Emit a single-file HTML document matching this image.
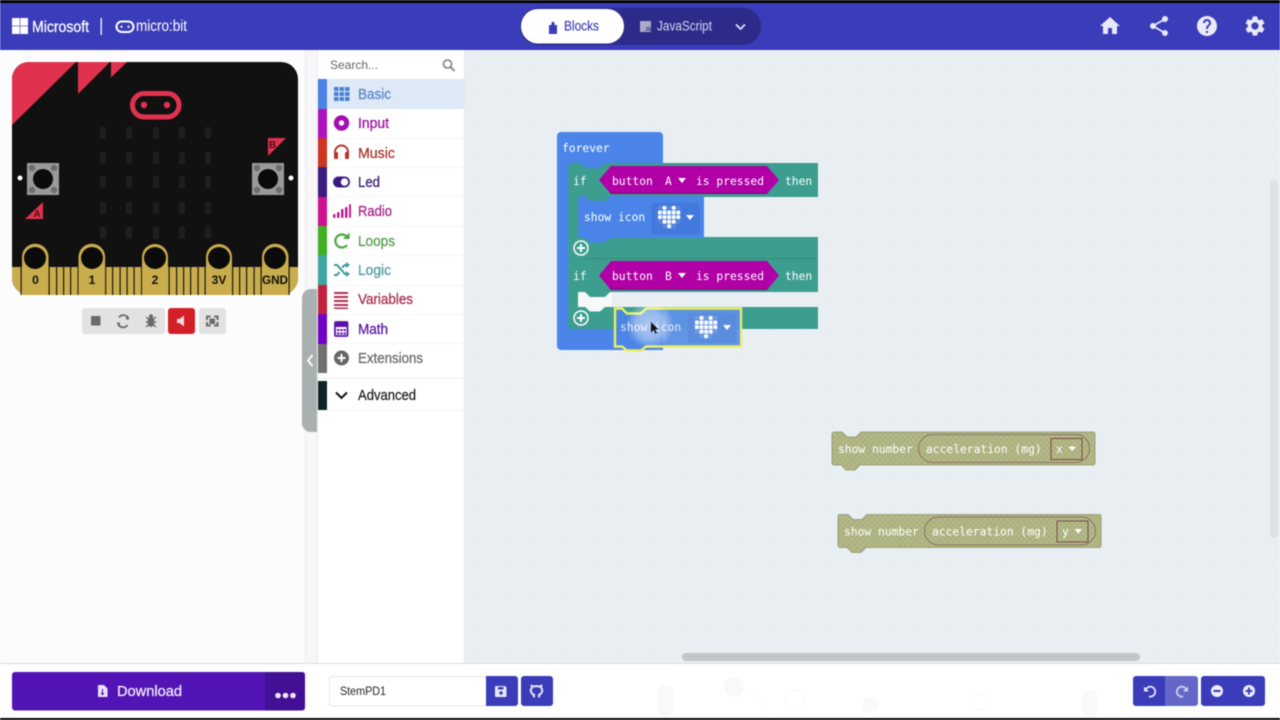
<!DOCTYPE html>
<html><head><meta charset="utf-8"><style>
html,body{margin:0;padding:0;width:1280px;height:720px;overflow:hidden;background:#fff}
svg{display:block;font-family:"Liberation Sans",sans-serif;filter:blur(.4px)}
.m{font-family:"DejaVu Sans Mono","Liberation Mono",monospace;font-size:11.3px;fill:#fff}
.t{font-size:14.5px;stroke-width:.25px}
</style></head><body>
<svg width="1280" height="720" viewBox="0 0 1280 720" xmlns="http://www.w3.org/2000/svg">
<defs>
<pattern id="dots" width="29.5" height="29.5" patternUnits="userSpaceOnUse" x="3" y="5"><rect width="1.5" height="1.5" fill="#e0e4e8"/></pattern>
<pattern id="hatch" width="4" height="4" patternUnits="userSpaceOnUse" patternTransform="rotate(45)"><rect width="4" height="4" fill="#afb482"/><rect width="2" height="2" fill="#b7bb8e"/><rect x="2" y="2" width="2" height="2" fill="#a9ae7c"/></pattern>
<radialGradient id="glow"><stop offset="0" stop-color="#fff" stop-opacity=".55"/><stop offset=".6" stop-color="#fff" stop-opacity=".4"/><stop offset="1" stop-color="#fff" stop-opacity="0"/></radialGradient>
<g id="heart" fill="#fff">
<g fill="#fff"><rect x="4.6" y="0" width="3.8" height="3.8"/><rect x="13.8" y="0" width="3.8" height="3.8"/>
<rect x="0" y="4.6" width="3.8" height="3.8"/><rect x="4.6" y="4.6" width="3.8" height="3.8"/><rect x="9.2" y="4.6" width="3.8" height="3.8"/><rect x="13.8" y="4.6" width="3.8" height="3.8"/><rect x="18.4" y="4.6" width="3.8" height="3.8"/>
<rect x="0" y="9.2" width="3.8" height="3.8"/><rect x="4.6" y="9.2" width="3.8" height="3.8"/><rect x="9.2" y="9.2" width="3.8" height="3.8"/><rect x="13.8" y="9.2" width="3.8" height="3.8"/><rect x="18.4" y="9.2" width="3.8" height="3.8"/>
<rect x="4.6" y="13.8" width="3.8" height="3.8"/><rect x="9.2" y="13.8" width="3.8" height="3.8"/><rect x="13.8" y="13.8" width="3.8" height="3.8"/>
<rect x="9.2" y="18.4" width="3.8" height="3.8"/></g>
<g fill="#fff" opacity=".12"><rect x="9.2" y="0" width="3.8" height="3.8"/><rect x="0" y="0" width="3.8" height="3.8"/><rect x="18.4" y="0" width="3.8" height="3.8"/><rect x="0" y="13.8" width="3.8" height="3.8"/><rect x="18.4" y="13.8" width="3.8" height="3.8"/><rect x="4.6" y="18.4" width="3.8" height="3.8"/><rect x="13.8" y="18.4" width="3.8" height="3.8"/></g>
</g>
</defs>

<!-- backgrounds -->
<rect width="1280" height="720" fill="#fff"/>
<rect x="0" y="49" width="305" height="614" fill="#fcfcfd"/>
<rect x="305" y="49" width="13" height="614" fill="#f7f7f8"/>
<rect x="305" y="49" width="1" height="614" fill="#ececec"/>
<rect x="317" y="49" width="1" height="614" fill="#ececec"/>
<rect x="465" y="49" width="815" height="614" fill="#e9eef2"/>
<rect x="465" y="49" width="815" height="614" fill="url(#dots)"/>
<rect x="318" y="49" width="147" height="614" fill="#fff"/>
<rect x="464" y="49" width="1" height="614" fill="#e6e8ea"/>

<!-- header -->
<rect width="1280" height="50" fill="#3a3cb9"/>
<rect width="1280" height="3" fill="#000"/>
<g fill="#fff"><rect x="12" y="18" width="7.7" height="7.7"/><rect x="20.3" y="18" width="7.7" height="7.7"/><rect x="12" y="26.3" width="7.7" height="7.7"/><rect x="20.3" y="26.3" width="7.7" height="7.7"/></g>
<text x="32" y="32" font-size="15.500" fill="#fff" stroke="#fff" stroke-width=".25" textLength="57" lengthAdjust="spacingAndGlyphs">Microsoft</text>
<rect x="100.500" y="18" width="1.400" height="17" fill="#eef"/>
<rect x="116.500" y="21.500" width="17" height="10.500" rx="5.200" fill="none" stroke="#fff" stroke-width="2"/>
<circle cx="121.500" cy="26.700" r="1.100" fill="#fff"/><circle cx="128.500" cy="26.700" r="1.100" fill="#fff"/>
<text x="136" y="31" font-size="15.500" fill="#fff" textLength="51" lengthAdjust="spacingAndGlyphs">micro:bit</text>

<rect x="520" y="8" width="241" height="37" rx="18.500" fill="#2c2b8a"/>
<rect x="521" y="9" width="103" height="34.500" rx="17" fill="#fff"/>
<path d="M549 25h2.500v-1.800a1.500 1.500 0 0 1 3 0V25H557v9h-8z" fill="#3a3cb9"/>
<text x="564" y="30.500" font-size="13.500" fill="#3a3cb9" stroke="#3a3cb9" stroke-width=".15" textLength="35" lengthAdjust="spacingAndGlyphs">Blocks</text>
<rect x="640" y="21" width="11" height="11" fill="#a9abc9"/><text x="645" y="31" font-size="5" font-weight="700" fill="#2c2b8a">JS</text>
<text x="657" y="30.500" font-size="13.500" fill="#d6d6f2" textLength="55" lengthAdjust="spacingAndGlyphs">JavaScript</text>
<path d="M736 24.500l4.500 4.500 4.500-4.500" fill="none" stroke="#dfe0f5" stroke-width="1.800"/>

<g fill="#e9e9f8">
<path transform="translate(1098 14)" d="M10 20v-6h4v6h5v-8h3L12 3 2 12h3v8z"/>
<path transform="translate(1147 14)" d="M18 16.080c-.76 0-1.440.3-1.960.77L8.910 12.700c.05-.23.09-.46.09-.7s-.04-.47-.09-.7l7.050-4.110c.54.5 1.250.81 2.040.81 1.660 0 3-1.340 3-3s-1.340-3-3-3-3 1.340-3 3c0 .24.04.47.09.7L8.040 9.810C7.500 9.310 6.790 9 6 9c-1.660 0-3 1.340-3 3s1.340 3 3 3c.79 0 1.500-.31 2.040-.81l7.120 4.160c-.05.21-.08.43-.08.65 0 1.610 1.310 2.920 2.920 2.920 1.610 0 2.920-1.310 2.920-2.920s-1.310-2.920-2.920-2.920z"/>
<path transform="translate(1195 14)" d="M12 2C6.480 2 2 6.480 2 12s4.480 10 10 10 10-4.480 10-10S17.520 2 12 2zm1 17h-2v-2h2v2zm2.070-7.750l-.9.92C13.450 12.900 13 13.500 13 15h-2v-.5c0-1.100.45-2.100 1.170-2.830l1.240-1.260c.37-.36.59-.86.59-1.410 0-1.100-.9-2-2-2s-2 .9-2 2H8c0-2.210 1.790-4 4-4s4 1.790 4 4c0 .88-.36 1.680-.93 2.250z"/>
<path transform="translate(1243 14)" d="M19.140 12.940c.04-.3.06-.61.06-.94 0-.32-.02-.64-.07-.94l2.030-1.580c.18-.14.23-.41.12-.61l-1.920-3.320c-.12-.22-.37-.29-.59-.22l-2.390.96c-.5-.38-1.030-.7-1.620-.94l-.36-2.540c-.04-.24-.24-.41-.48-.41h-3.840c-.24 0-.43.17-.47.41l-.36 2.540c-.59.24-1.130.57-1.620.94l-2.390-.96c-.22-.08-.47 0-.59.22L2.740 8.870c-.12.21-.08.47.12.61l2.030 1.580c-.05.3-.09.63-.09.94s.02.64.07.94l-2.030 1.580c-.18.14-.23.41-.12.61l1.920 3.320c.12.22.37.29.59.22l2.390-.96c.5.38 1.030.7 1.620.94l.36 2.540c.05.24.24.41.48.41h3.840c.24 0 .44-.17.47-.41l.36-2.540c.59-.24 1.130-.56 1.620-.94l2.390.96c.22.08.47 0 .59-.22l1.920-3.320c.12-.22.07-.47-.12-.61l-2.010-1.580zM12 15.600c-1.980 0-3.600-1.620-3.600-3.600s1.620-3.600 3.600-3.600 3.600 1.620 3.600 3.600-1.620 3.600-3.600 3.600z"/>
</g>

<!-- micro:bit -->
<rect x="12" y="62" width="286" height="233" rx="17" fill="#111"/>
<path d="M12 125V79a17 17 0 0 1 17-17h47z" fill="#e0324f"/>
<path d="M78 62h32L78 94z" fill="#e0324f"/>
<path d="M111 62h16l-16 15.500z" fill="#e0324f"/>
<rect x="132.500" y="93.500" width="46.500" height="23.500" rx="11.700" fill="none" stroke="#e0324f" stroke-width="5"/>
<circle cx="144" cy="105" r="3.200" fill="#e0324f"/><circle cx="167" cy="105" r="3.200" fill="#e0324f"/>
<g fill="#1e1e1e">
<rect x="100" y="127" width="6" height="12" rx="1.500"/><rect x="126" y="127" width="6" height="12" rx="1.500"/><rect x="153" y="127" width="6" height="12" rx="1.500"/><rect x="179" y="127" width="6" height="12" rx="1.500"/><rect x="205" y="127" width="6" height="12" rx="1.500"/>
<rect x="100" y="152" width="6" height="12" rx="1.500"/><rect x="126" y="152" width="6" height="12" rx="1.500"/><rect x="153" y="152" width="6" height="12" rx="1.500"/><rect x="179" y="152" width="6" height="12" rx="1.500"/><rect x="205" y="152" width="6" height="12" rx="1.500"/>
<rect x="100" y="176" width="6" height="12" rx="1.500"/><rect x="126" y="176" width="6" height="12" rx="1.500"/><rect x="153" y="176" width="6" height="12" rx="1.500"/><rect x="179" y="176" width="6" height="12" rx="1.500"/><rect x="205" y="176" width="6" height="12" rx="1.500"/>
<rect x="100" y="202" width="6" height="12" rx="1.500"/><rect x="126" y="202" width="6" height="12" rx="1.500"/><rect x="153" y="202" width="6" height="12" rx="1.500"/><rect x="179" y="202" width="6" height="12" rx="1.500"/><rect x="205" y="202" width="6" height="12" rx="1.500"/>
<rect x="100" y="227" width="6" height="12" rx="1.500"/><rect x="126" y="227" width="6" height="12" rx="1.500"/><rect x="153" y="227" width="6" height="12" rx="1.500"/><rect x="179" y="227" width="6" height="12" rx="1.500"/><rect x="205" y="227" width="6" height="12" rx="1.500"/>
</g>
<!-- push buttons -->
<rect x="27" y="163" width="32" height="32" fill="#9a9a9a"/><circle cx="43" cy="179" r="10" fill="#0b0b0b"/>
<circle cx="32" cy="168" r="3.200" fill="#6e6e6e"/><circle cx="54" cy="168" r="3.200" fill="#6e6e6e"/><circle cx="32" cy="190" r="3.200" fill="#6e6e6e"/><circle cx="54" cy="190" r="3.200" fill="#6e6e6e"/>
<rect x="252" y="163" width="32" height="32" fill="#9a9a9a"/><circle cx="268" cy="179" r="10" fill="#0b0b0b"/>
<circle cx="257" cy="168" r="3.200" fill="#6e6e6e"/><circle cx="279" cy="168" r="3.200" fill="#6e6e6e"/><circle cx="257" cy="190" r="3.200" fill="#6e6e6e"/><circle cx="279" cy="190" r="3.200" fill="#6e6e6e"/>
<circle cx="20" cy="178" r="2.500" fill="#fff"/><circle cx="291" cy="178" r="2.500" fill="#fff"/>
<path d="M268 138h18l-18 18z" fill="#e0324f"/><text x="269" y="148" font-size="10" font-weight="700" fill="#4a0d18">B</text>
<path d="M43 202v17H25z" fill="#e0324f"/><text x="33.500" y="217" font-size="10" font-weight="700" fill="#4a0d18">A</text>
<!-- edge connector -->
<path d="M12 267h286v11a17 17 0 0 1-17 17H29a17 17 0 0 1-17-17z" fill="#c9ad4d"/>
<g fill="#1a1a14">
<rect x="20.500" y="267" width="1.200" height="28"/><rect x="48.500" y="267" width="1.200" height="28"/><rect x="56" y="267" width="1.200" height="28"/><rect x="63" y="267" width="1.200" height="28"/><rect x="70" y="267" width="1.200" height="28"/><rect x="77.500" y="267" width="1.200" height="28"/>
<rect x="105" y="267" width="1.200" height="28"/><rect x="112" y="267" width="1.200" height="28"/><rect x="119.500" y="267" width="1.200" height="28"/><rect x="126.500" y="267" width="1.200" height="28"/><rect x="133.500" y="267" width="1.200" height="28"/><rect x="141" y="267" width="1.200" height="28"/>
<rect x="168.500" y="267" width="1.200" height="28"/><rect x="176" y="267" width="1.200" height="28"/><rect x="183" y="267" width="1.200" height="28"/><rect x="190" y="267" width="1.200" height="28"/><rect x="197.500" y="267" width="1.200" height="28"/><rect x="204.500" y="267" width="1.200" height="28"/>
<rect x="232" y="267" width="1.200" height="28"/><rect x="239" y="267" width="1.200" height="28"/><rect x="246" y="267" width="1.200" height="28"/><rect x="253.500" y="267" width="1.200" height="28"/><rect x="260.500" y="267" width="1.200" height="28"/><rect x="288.500" y="267" width="1.200" height="28"/>
</g>
<g fill="#c9ad4d">
<path d="M22 295v-38a13 13 0 0 1 26.500 0v38z"/><path d="M78.500 295v-38a13.300 13.300 0 0 1 26.600 0v38z"/><path d="M142 295v-38a13 13 0 0 1 26 0v38z"/><path d="M206 295v-38a13 13 0 0 1 26 0v38z"/><path d="M262 295v-38a13 13 0 0 1 26.500 0v38z"/>
</g>
<g fill="#0b0b0b"><circle cx="35" cy="258" r="11"/><circle cx="92" cy="258" r="11"/><circle cx="155" cy="258" r="11"/><circle cx="219" cy="258" r="11"/><circle cx="275" cy="258" r="11"/></g>
<g font-size="12" font-weight="700" fill="#111" text-anchor="middle">
<text x="35.500" y="284">0</text><text x="92" y="284">1</text><text x="155" y="284">2</text><text x="219" y="284">3V</text><text x="275" y="284" textLength="26" lengthAdjust="spacingAndGlyphs">GND</text>
</g>
<!-- sim toolbar -->
<rect x="82" y="308" width="83" height="26" rx="3" fill="#e2e2e2"/>
<rect x="168" y="308" width="27" height="26" rx="3" fill="#d32027"/>
<rect x="199" y="308" width="27" height="26" rx="3" fill="#e2e2e2"/>
<rect x="91" y="316" width="9.500" height="9.500" rx="1" fill="#6b6b6b"/>
<path d="M128.500 318.500a5.500 5.500 0 0 0-9.500-1M118 324a5.500 5.500 0 0 0 9.500 1" fill="none" stroke="#6b6b6b" stroke-width="1.800"/>
<path d="M126 315v4.500h3.500zM120 327v-4.500h-3.500z" fill="#6b6b6b"/>
<ellipse cx="151" cy="322" rx="3.500" ry="5" fill="#6b6b6b"/><circle cx="151" cy="316.500" r="2.200" fill="#6b6b6b"/>
<path d="M146 317l3 2.500M156 317l-3 2.500M145.500 322h3M156.500 322h-3M146 327l3-2.500M156 327l-3-2.500" stroke="#6b6b6b" stroke-width="1.200"/>
<path d="M177 319h2.500l4.500-3.500v11l-4.500-3.500H177z" fill="#f3d9d9"/>
<path d="M207 320v-3.500h3.500M214 316.500h3.500v3.500M217.500 322v3.500H214M210.500 325.500H207V322" fill="none" stroke="#6b6b6b" stroke-width="2"/><rect x="209.500" y="318.500" width="5.500" height="5.500" fill="#6b6b6b"/>
<!-- splitter -->
<path d="M317 289h-6a9 9 0 0 0-9 9v125a9 9 0 0 0 9 9h6z" fill="#a9b1b0"/>
<path d="M312.500 355l-4.500 5.500 4.500 5.500" fill="none" stroke="#fff" stroke-width="1.800"/>

<!-- toolbox -->
<text x="330" y="69" font-size="12" fill="#666">Search...</text>
<circle cx="447.500" cy="64" r="4" fill="none" stroke="#8a8a8a" stroke-width="1.800"/><path d="M450.500 67l4 4" stroke="#8a8a8a" stroke-width="2"/>
<rect x="327" y="79" width="137" height="30" fill="#dde9f7"/>
<g fill="#f6f6f6">
<rect x="327" y="138" width="137" height="1"/><rect x="327" y="167" width="137" height="1"/><rect x="327" y="196" width="137" height="1"/><rect x="327" y="226" width="137" height="1"/><rect x="327" y="255" width="137" height="1"/><rect x="327" y="285" width="137" height="1"/><rect x="327" y="314" width="137" height="1"/><rect x="327" y="343" width="137" height="1"/><rect x="318" y="377" width="146" height="2"/><rect x="327" y="410" width="137" height="1"/>
</g>
<rect x="318" y="79" width="9" height="30" fill="#4b80e6"/>
<rect x="318" y="109" width="9" height="29" fill="#b011c0"/>
<rect x="318" y="138" width="9" height="29" fill="#cf3423"/>
<rect x="318" y="167" width="9" height="30" fill="#3e1a80"/>
<rect x="318" y="197" width="9" height="29" fill="#cf1190"/>
<rect x="318" y="226" width="9" height="29" fill="#40b022"/>
<rect x="318" y="255" width="9" height="30" fill="#3fa5a0"/>
<rect x="318" y="285" width="9" height="29" fill="#c4213f"/>
<rect x="318" y="314" width="9" height="30" fill="#7100c7"/>
<rect x="318" y="344" width="9" height="29" fill="#707070"/>
<rect x="318" y="381" width="9" height="29" fill="#0e2424"/>

<g class="t">
<text x="358" y="99" fill="#5b84c4" stroke="#5b84c4" textLength="33" lengthAdjust="spacingAndGlyphs">Basic</text>
<text x="358" y="128" fill="#9a0fa0" stroke="#9a0fa0" textLength="31" lengthAdjust="spacingAndGlyphs">Input</text>
<text x="358" y="158" fill="#a5352a" stroke="#a5352a" textLength="37" lengthAdjust="spacingAndGlyphs">Music</text>
<text x="358" y="187" fill="#351b6e" stroke="#351b6e" textLength="22" lengthAdjust="spacingAndGlyphs">Led</text>
<text x="358" y="216" fill="#a61f88" stroke="#a61f88" textLength="34" lengthAdjust="spacingAndGlyphs">Radio</text>
<text x="358" y="246" fill="#4f9c49" stroke="#4f9c49" textLength="37" lengthAdjust="spacingAndGlyphs">Loops</text>
<text x="358" y="275" fill="#4f9c9c" stroke="#4f9c9c" textLength="33" lengthAdjust="spacingAndGlyphs">Logic</text>
<text x="358" y="304" fill="#a32a4a" stroke="#a32a4a" textLength="55" lengthAdjust="spacingAndGlyphs">Variables</text>
<text x="358" y="334" fill="#5a149e" stroke="#5a149e" textLength="30" lengthAdjust="spacingAndGlyphs">Math</text>
<text x="358" y="363" fill="#6a6a6a" stroke="#6a6a6a" textLength="65" lengthAdjust="spacingAndGlyphs">Extensions</text>
<text x="358" y="400" fill="#222" stroke="#222" textLength="58" lengthAdjust="spacingAndGlyphs">Advanced</text>
</g>
<!-- toolbox icons -->
<g fill="#4b80d0"><rect x="334" y="87" width="4.500" height="4"/><rect x="339.500" y="87" width="4.500" height="4"/><rect x="345" y="87" width="4.500" height="4"/><rect x="334" y="92" width="4.500" height="4"/><rect x="339.500" y="92" width="4.500" height="4"/><rect x="345" y="92" width="4.500" height="4"/><rect x="334" y="97" width="4.500" height="4"/><rect x="339.500" y="97" width="4.500" height="4"/><rect x="345" y="97" width="4.500" height="4"/></g>
<circle cx="341.500" cy="123" r="5.200" fill="none" stroke="#a30fb0" stroke-width="5"/>
<path d="M335 156v-4a6.500 6.500 0 0 1 13 0v4" fill="none" stroke="#b5352a" stroke-width="2"/><rect x="334" y="152" width="4" height="7" rx="1" fill="#b5352a"/><rect x="345" y="152" width="4" height="7" rx="1" fill="#b5352a"/>
<rect x="333" y="176.500" width="17" height="11" rx="5.500" fill="#3e1a80"/><circle cx="344.500" cy="182" r="3.700" fill="#fff"/>
<g fill="#b51f90"><rect x="333" y="214" width="2.500" height="4" rx="1"/><rect x="337" y="212" width="2.500" height="6" rx="1"/><rect x="341" y="209" width="2.500" height="9" rx="1"/><rect x="345" y="207" width="2.500" height="11" rx="1"/><rect x="349" y="204" width="2" height="14" rx="1"/></g>
<path d="M347 245a6.500 6.500 0 1 1 0-8" fill="none" stroke="#4ba53e" stroke-width="2.200"/><path d="M349.500 232.500v6.500H343z" fill="#4ba53e"/>
<path d="M334 265h3l8 9h2M334 275h3l2.500-3M342 267.500l3-2.500h2" fill="none" stroke="#3f9a9a" stroke-width="2"/><path d="M346 262l4 3-4 3zM346 271l4 3-4 3z" fill="#3f9a9a"/>
<g fill="#b03050"><rect x="334" y="292" width="14" height="2"/><rect x="334" y="296" width="14" height="2"/><rect x="334" y="300" width="14" height="2"/><rect x="334" y="304" width="14" height="2"/><rect x="334" y="307.500" width="14" height="1.500"/></g>
<rect x="335" y="322" width="12.500" height="14" rx="1" fill="none" stroke="#5f10a8" stroke-width="1.800"/><rect x="335" y="322" width="12.500" height="5" fill="#5f10a8"/><g fill="#5f10a8"><rect x="337" y="329" width="2.300" height="2"/><rect x="340.300" y="329" width="2.300" height="2"/><rect x="343.500" y="329" width="2.300" height="2"/><rect x="337" y="332.500" width="2.300" height="2"/><rect x="340.300" y="332.500" width="2.300" height="2"/><rect x="343.500" y="332.500" width="2.300" height="2"/></g>
<circle cx="341.500" cy="358" r="7.500" fill="#666"/><path d="M341.500 354v8M337.500 358h8" stroke="#fff" stroke-width="2"/>
<path d="M336 392.500l5.500 5.500 5.500-5.500" fill="none" stroke="#111" stroke-width="2"/>

<!-- forever block -->
<path d="M557 136a4 4 0 0 1 4-4h98a4 4 0 0 1 4 4v214H561a4 4 0 0 1-4-4z" fill="#4c85ea"/>
<text class="m" x="562" y="152">forever</text>
<!-- if block -->
<path d="M572 163h8l5 5h15l5-5h213v34H610l-5 5h-15l-5-5h-7v40h240v22H572a4 4 0 0 1-4-4V167a4 4 0 0 1 4-4z" fill="#3d9e8f"/>
<path d="M568 259h250v33H610l-5 5h-15l-5-5h-7v15h240v22H572a4 4 0 0 1-4-4z" fill="#3d9e8f"/>
<path d="M585 258.500h233" stroke="#328577" stroke-width=".8"/>
<rect x="612" y="292" width="206" height="15" fill="#e9eef2"/>
<path d="M578 292h7l5 5h15l5-5h2v15h-7l-5 4.500h-10l-5-4.500h-7z" fill="#f6f8f9"/>
<!-- hexagons -->
<path d="M611 166h156l12 14-12 14H611l-12-14z" fill="#b000a6"/>
<path d="M611 192.500h156l1.500-1 -1.500 2.500H611l-2-2.500z" fill="#8e0088"/>
<path d="M611 261h156l12 14.500-12 14.500H611l-12-14.500z" fill="#b000a6"/>
<path d="M611 288.500h156l1.500-1-1.500 2.500H611l-2-2.500z" fill="#8e0088"/>
<text class="m" x="573" y="185">if</text>
<text class="m" x="612" y="185">button</text>
<text class="m" x="665" y="185">A</text>
<path d="M678 178h8l-4 5z" fill="#fff"/>
<text class="m" x="696" y="185">is pressed</text>
<text class="m" x="785" y="185">then</text>
<text class="m" x="573" y="280">if</text>
<text class="m" x="612" y="280">button</text>
<text class="m" x="665" y="280">B</text>
<path d="M678 273h8l-4 5z" fill="#fff"/>
<text class="m" x="696" y="280">is pressed</text>
<text class="m" x="785" y="280">then</text>
<!-- show icon -->
<path d="M582 196h3l5 5h15l5-5h94v42H610l-5 4.500h-15l-5-4.500h-3a4 4 0 0 1-4-4v-34a4 4 0 0 1 4-4z" fill="#4b84e8"/>
<text class="m" x="584" y="221">show icon</text>
<rect x="652" y="203.500" width="47" height="30" rx="3" fill="#4379dc" stroke="#3f72d2" stroke-width=".8"/>
<use href="#heart" x="658" y="206"/>
<path d="M686 215h8l-4 5z" fill="#fff"/>
<!-- plus icons -->
<circle cx="581" cy="248" r="7" fill="#3d9e8f" stroke="#fff" stroke-width="1.500"/><path d="M581 244v8M577 248h8" stroke="#fff" stroke-width="2"/>
<circle cx="581" cy="318" r="7" fill="#3d9e8f" stroke="#fff" stroke-width="1.500"/><path d="M581 314v8M577 318h8" stroke="#fff" stroke-width="2"/>
<!-- dragged block -->
<path d="M615 308.500h7l5 5h14l5-5h95v38H646l-5 4h-14l-5-4h-7z" fill="#4b86e6" fill-opacity=".92" stroke="#e9f05f" stroke-width="2.400"/>
<rect x="663" y="310" width="77" height="35" fill="#6b9ae6" fill-opacity=".55"/>
<circle cx="650" cy="325" r="24" fill="url(#glow)"/>
<text class="m" x="620" y="331" fill-opacity=".85">show icon</text>
<rect x="688" y="313" width="48" height="30" rx="3" fill="#5a8bdc" fill-opacity=".8"/>
<use href="#heart" x="695" y="316"/>
<path d="M723 325h8l-4 5z" fill="#fff"/>
<path d="M651 322v10.500l2.500-2.500 2 3.800 1.500-.8-2-3.500h3.500z" fill="#111"/>

<!-- disabled show number 1 -->
<g>
<path d="M834 432h8l5 5h9l5-5h232a2 2 0 0 1 2 2v29a2 2 0 0 1-2 2H860l-5 5h-9l-5-5h-7a2 2 0 0 1-2-2v-29a2 2 0 0 1 2-2z" fill="url(#hatch)" stroke="#8c9468" stroke-width=".8"/>
<rect x="918.500" y="434.500" width="171" height="28" rx="14" fill="url(#hatch)" stroke="#8b7463" stroke-width="1"/>
<rect x="1051" y="438.500" width="31" height="21" fill="none" stroke="#7a4a4a" stroke-width="1"/>
<text class="m" x="838" y="453">show number</text>
<text class="m" x="926" y="453">acceleration (mg)</text>
<text class="m" x="1056" y="453">x</text>
<path d="M1068.500 446.500h7.500l-3.750 4.500z" fill="#fff"/>
</g>
<!-- disabled show number 2 -->
<g transform="translate(6 82.500)">
<path d="M834 432h8l5 5h9l5-5h232a2 2 0 0 1 2 2v29a2 2 0 0 1-2 2H860l-5 5h-9l-5-5h-7a2 2 0 0 1-2-2v-29a2 2 0 0 1 2-2z" fill="url(#hatch)" stroke="#8c9468" stroke-width=".8"/>
<rect x="918.500" y="434.500" width="171" height="28" rx="14" fill="url(#hatch)" stroke="#8b7463" stroke-width="1"/>
<rect x="1051" y="438.500" width="31" height="21" fill="none" stroke="#7a4a4a" stroke-width="1"/>
<text class="m" x="838" y="453">show number</text>
<text class="m" x="926" y="453">acceleration (mg)</text>
<text class="m" x="1056" y="453">y</text>
<path d="M1068.500 446.500h7.500l-3.750 4.500z" fill="#fff"/>
</g>

<!-- scrollbars -->
<rect x="682" y="653" width="458" height="8" rx="4" fill="#c3c5c6"/>
<rect x="1270" y="180" width="8" height="358" rx="4" fill="#dfe2e5"/>

<!-- bottom bar -->
<rect x="0" y="663" width="1280" height="57" fill="#fff"/>
<rect x="0" y="663" width="1280" height="1" fill="#d9dbdd"/>
<g fill="#f9f9f9">
<rect x="657" y="685" width="16" height="32" rx="8"/><circle cx="734" cy="687" r="10"/><path d="M748 688l25 29" stroke="#f8f8f8"/><circle cx="870" cy="705" r="8"/><rect x="1082" y="690" width="16" height="27" rx="8"/><circle cx="795" cy="700" r="10" fill="none" stroke="#f8f8f8"/><circle cx="980" cy="702" r="8" fill="none" stroke="#f8f8f8"/>
</g>
<rect x="0" y="718" width="1280" height="2" fill="#000"/>
<rect x="12" y="672" width="293" height="38.500" rx="3" fill="#5214b5"/>
<path d="M265 672h37a3 3 0 0 1 3 3v32.500a3 3 0 0 1-3 3h-37z" fill="#430f94"/>
<path d="M98 685h6l3.500 3.500V697H98z" fill="#ecdff7"/><path d="M102 689v4h-1.500l2 2.500 2-2.500H103v-4z" fill="#5214b5"/>
<text x="117" y="696" font-size="14.500" fill="#f0e8fa" stroke="#f0e8fa" stroke-width=".3" textLength="65" lengthAdjust="spacingAndGlyphs">Download</text>
<circle cx="278" cy="695.500" r="2.800" fill="#f0e8fa"/><circle cx="285.500" cy="695.500" r="2.800" fill="#f0e8fa"/><circle cx="293" cy="695.500" r="2.800" fill="#f0e8fa"/>
<rect x="329.500" y="676.500" width="157" height="29.500" rx="3" fill="#fff" stroke="#e4e4e4"/>
<text x="340" y="695" font-size="12" fill="#222" textLength="46" lengthAdjust="spacingAndGlyphs">StemPD1</text>
<path d="M486 676h29a3 3 0 0 1 3 3v24a3 3 0 0 1-3 3h-29z" fill="#3a3cb9"/>
<rect x="521" y="676" width="32" height="30" rx="3" fill="#3a3cb9"/>
<path d="M496 686h9l1.500 1.500V696a1 1 0 0 1-1 1h-9.500a1 1 0 0 1-1-1v-9a1 1 0 0 1 1-1z" fill="#e6e6f8"/><rect x="498" y="687" width="5.500" height="2.500" fill="#3a3cb9"/><circle cx="501" cy="693" r="1.700" fill="#3a3cb9"/>
<path d="M534 697.500v-2.700c-2-.8-3.200-2.200-3.200-4.300 0-1 .4-1.900 1-2.600l-.1-2.100 2.200.8a7 7 0 0 1 5.200 0l2.200-.8-.1 2.100c.6.7 1 1.600 1 2.600 0 2.100-1.200 3.500-3.200 4.300v2.700" fill="none" stroke="#e6e6f8" stroke-width="2"/>
<path d="M1133 679a3 3 0 0 1 3-3h29v30h-29a3 3 0 0 1-3-3z" fill="#3a3cb9"/>
<path d="M1165 676h30a3 3 0 0 1 3 3v24a3 3 0 0 1-3 3h-30z" fill="#6368c8"/>
<rect x="1201" y="676" width="64" height="30" rx="3" fill="#3a3cb9"/>
<path d="M1146 689a5 5 0 1 1 3 7.500" fill="none" stroke="#e6e6f8" stroke-width="1.800"/><path d="M1144 686.500v5h5z" fill="#e6e6f8"/>
<path d="M1186 689a5 5 0 1 0-3 7.500" fill="none" stroke="#d0d2f0" stroke-width="1.800"/><path d="M1188 686.500v5h-5z" fill="#d0d2f0"/>
<circle cx="1217" cy="691" r="6" fill="#eef"/><rect x="1213.500" y="690" width="7" height="2" fill="#3a3cb9"/>
<circle cx="1249" cy="691" r="6" fill="#eef"/><rect x="1245.500" y="690" width="7" height="2" fill="#3a3cb9"/><rect x="1248" y="687.500" width="2" height="7" fill="#3a3cb9"/>
</svg>
</body></html>
